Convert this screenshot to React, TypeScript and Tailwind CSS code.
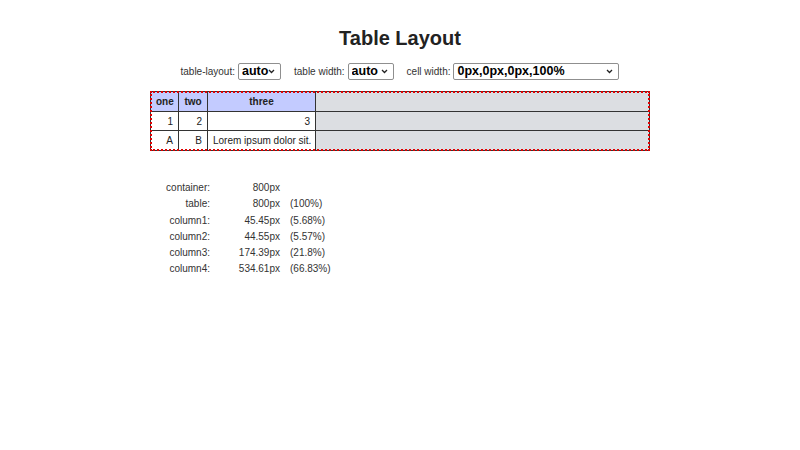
import React from "react";

const stats = [
  { label: "container:", value: "800px", pct: "" },
  { label: "table:", value: "800px", pct: "(100%)" },
  { label: "column1:", value: "45.45px", pct: "(5.68%)" },
  { label: "column2:", value: "44.55px", pct: "(5.57%)" },
  { label: "column3:", value: "174.39px", pct: "(21.8%)" },
  { label: "column4:", value: "534.61px", pct: "(66.83%)" },
];

function Control({ label, value, options, width }: { label: string; value: string; options: string[]; width: string }) {
  return (
    <label className="flex items-center gap-[3px]">
      <span>{label}</span>
      <span className="relative inline-flex">
        <select
          defaultValue={value}
          className={`${width} h-[17px] appearance-none border border-[#8f8f8f] rounded-[2px] bg-white text-[12.5px] font-bold leading-[15px] pl-[3px] text-black`}
        >
          {options.map((o) => (
            <option key={o}>{o}</option>
          ))}
        </select>
        <svg
          className="absolute right-[6px] top-[6px] pointer-events-none"
          width="7"
          height="5"
          viewBox="0 0 7 5"
          fill="none"
        >
          <path d="M1 1l2.5 2.5L6 1" stroke="#222" strokeWidth="1.3" />
        </svg>
      </span>
    </label>
  );
}

export default function App() {
  const cell = "border border-[#333] px-[5px] h-[19px] leading-[17px]";
  return (
    <div className="w-[800px] h-[450px] bg-white text-[#222] font-['Liberation_Sans',Arial,sans-serif]">
      <h1 className="pt-[25px] text-center text-[20px] font-bold leading-[26px] text-[#222]">Table Layout</h1>

      <div className="mt-[12px] flex justify-center items-center gap-[13px] text-[10px] text-[#333]">
        <Control label="table-layout:" value="auto" options={["auto", "fixed"]} width="w-[43px]" />
        <Control label="table width:" value="auto" options={["auto", "100%"]} width="w-[46px]" />
        <Control label="cell width:" value="0px,0px,0px,100%" options={["0px,0px,0px,100%"]} width="w-[166px]" />
      </div>

      <div className="mx-auto mt-[11px] w-[500px]">
        <div className="relative">
          <table className="w-full table-fixed border-collapse text-[10px] text-[#222]">
            <colgroup>
              <col className="w-[28px]" />
              <col className="w-[29px]" />
              <col className="w-[108px]" />
              <col />
            </colgroup>
            <thead>
              <tr className="bg-[#c3cbff]">
                <th className={`${cell} text-center font-bold h-[20px]`}>one</th>
                <th className={`${cell} text-center font-bold`}>two</th>
                <th className={`${cell} text-center font-bold`}>three</th>
                <th className={`${cell} bg-[#dcdee2]`}></th>
              </tr>
            </thead>
            <tbody>
              <tr>
                <td className={`${cell} text-right`}>1</td>
                <td className={`${cell} text-right`}>2</td>
                <td className={`${cell} text-right`}>3</td>
                <td className={`${cell} bg-[#dcdee2]`}></td>
              </tr>
              <tr>
                <td className={`${cell} text-right h-[20px]`}>A</td>
                <td className={`${cell} text-right`}>B</td>
                <td className={`${cell} whitespace-nowrap`}>Lorem ipsum dolor sit.</td>
                <td className={`${cell} bg-[#dcdee2]`}></td>
              </tr>
            </tbody>
          </table>
          <div className="absolute inset-0 z-10 border-2 border-dotted border-[#e00000] pointer-events-none" />
        </div>

        <div className="mt-[29px] grid grid-cols-[60px_60px_auto] gap-x-[10px] text-[10px] leading-[16.3px] text-[#333]">
          {stats.map((s) => (
            <React.Fragment key={s.label}>
              <div className="text-right">{s.label}</div>
              <div className="text-right">{s.value}</div>
              <div>{s.pct}</div>
            </React.Fragment>
          ))}
        </div>
      </div>
    </div>
  );
}
